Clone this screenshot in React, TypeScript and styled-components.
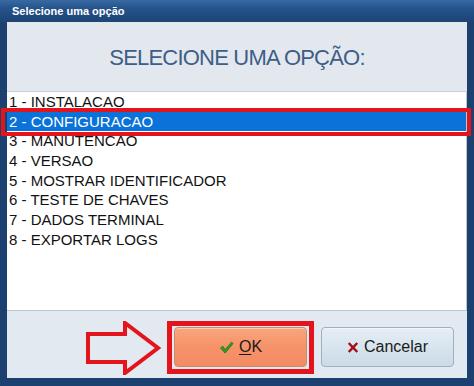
import React from "react";
import styled, { createGlobalStyle } from "styled-components";

const options = [
  "1 - INSTALACAO",
  "2 - CONFIGURACAO",
  "3 - MANUTENCAO",
  "4 - VERSAO",
  "5 - MOSTRAR IDENTIFICADOR",
  "6 - TESTE DE CHAVES",
  "7 - DADOS TERMINAL",
  "8 - EXPORTAR LOGS",
];

const GlobalStyle = createGlobalStyle`
  html, body {
    margin: 0;
    padding: 0;
    background: #1c4171;
  }
  * {
    box-sizing: border-box;
  }
`;

const App = () => {
  return (
    <>
      <GlobalStyle />
      <Window>
        <TitleBar>Selecione uma opção</TitleBar>
        <Body>
          <Header>
            <Heading>SELECIONE UMA OPÇÃO:</Heading>
          </Header>
          <List>
            {options.map((opt, i) => (
              <Item key={opt} $selected={i === 1}>
                {opt}
              </Item>
            ))}
          </List>
          <Footer>
            <Arrow width="76" height="54" viewBox="0 0 76 54">
              <path
                d="M2 13 H39 V2 L72 27 L39 52 V41 H2 Z"
                fill="none"
                stroke="#e3141b"
                strokeWidth="4"
                strokeLinejoin="miter"
              />
            </Arrow>
            <Button $variant="ok" $marked>
              <CheckIcon viewBox="0 0 16 16" width="15" height="15">
                <path
                  d="M1.5 8.5 L4 6.5 L6.5 10 L13.5 2 L15 4 L6.5 14 Z"
                  fill="#2e9a1e"
                  stroke="#1d6e12"
                  strokeWidth="0.6"
                />
              </CheckIcon>
              <span>
                <u>O</u>K
              </span>
            </Button>
            <Button $variant="cancel">
              <CrossIcon viewBox="0 0 14 14" width="12" height="13">
                <path
                  d="M1 2.5 L3 1 L7 5 L11 1 L13 2.5 L9 7 L13 11.5 L11 13 L7 9 L3 13 L1 11.5 L5 7 Z"
                  fill="#a3101a"
                />
              </CrossIcon>
              <span>Cancelar</span>
            </Button>
          </Footer>
        </Body>
      </Window>
    </>
  );
};

export default App;

const Window = styled.div`
  width: 474px;
  height: 386px;
  display: flex;
  flex-direction: column;
  background: #1c4171;
  padding: 0 7px 8px 7px;
  font-family: "Liberation Sans", Arial, sans-serif;
`;

const TitleBar = styled.div`
  height: 22px;
  display: flex;
  align-items: center;
  margin: 0 -7px;
  padding-left: 12px;
  background: linear-gradient(to bottom, #3a6aa4 0%, #24528a 40%, #1d4474 100%);
  color: #ffffff;
  font-family: "Liberation Sans", Arial, sans-serif;
  font-weight: bold;
  font-size: 11px;
`;

const Body = styled.div`
  flex: 1;
  display: flex;
  flex-direction: column;
  background: #e4e9f0;
`;

const Header = styled.div`
  height: 69px;
  display: flex;
  align-items: center;
  justify-content: center;
  background: #e3e8ef;
`;

const Heading = styled.h1`
  margin: 0;
  padding-top: 2px;
  font-weight: normal;
  font-size: 22px;
  letter-spacing: -0.8px;
  color: #3d5e86;
`;

const List = styled.div`
  flex: 1;
  display: flex;
  flex-direction: column;
  background: #ffffff;
  border-top: 1px solid #c4d0dc;
  border-bottom: 1px solid #b8c6d4;
  border-right: 1px solid #b8c6d4;
`;

const Item = styled.div<{ $selected?: boolean }>`
  position: relative;
  height: 19.7px;
  line-height: 19.7px;
  padding-left: 2px;
  font-size: 15px;
  color: ${(p) => (p.$selected ? "#ffffff" : "#111111")};
  background: ${(p) => (p.$selected ? "#0a72d8" : "transparent")};
  white-space: nowrap;

  ${(p) =>
    p.$selected &&
    `
    &::after {
      content: "";
      position: absolute;
      left: -6px;
      right: -5px;
      top: -4px;
      bottom: -5px;
      border: 4px solid #e3141b;
    }
  `}
`;

const Footer = styled.div`
  position: relative;
  height: 67px;
  display: flex;
  justify-content: flex-end;
  align-items: flex-start;
  gap: 14px;
  padding: 16px 13px 0 0;
  background: #e3e9f0;
`;

const Arrow = styled.svg`
  position: absolute;
  left: 79px;
  top: 10px;
`;

const Button = styled.div<{ $variant: "ok" | "cancel"; $marked?: boolean }>`
  position: relative;
  width: 133px;
  height: 40px;
  display: flex;
  align-items: center;
  justify-content: center;
  gap: 5px;
  border-radius: 4px;
  font-size: 16px;
  color: #1a1a1a;
  border: 1px solid
    ${(p) => (p.$variant === "ok" ? "#c98a6d" : "#9fb0c2")};
  background: ${(p) =>
    p.$variant === "ok"
      ? "linear-gradient(to bottom, #faa57c 0%, #f6926a 50%, #f28b62 100%)"
      : "linear-gradient(to bottom, #e6eef6 0%, #d8e4ee 50%, #ccdbe7 100%)"};
  box-shadow: inset 0 1px 0 rgba(255, 255, 255, 0.45);

  ${(p) =>
    p.$marked &&
    `
    &::after {
      content: "";
      position: absolute;
      left: -8px;
      right: -8px;
      top: -7px;
      bottom: -8px;
      border: 5px solid #e3141b;
    }
  `}

  u {
    text-decoration-thickness: 1px;
    text-underline-offset: 2px;
  }
`;

const CheckIcon = styled.svg`
  margin-top: 1px;
`;

const CrossIcon = styled.svg`
  margin-top: 1px;
`;
